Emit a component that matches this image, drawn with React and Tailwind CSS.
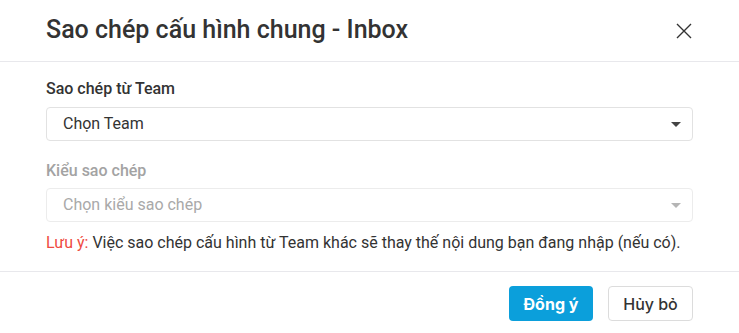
import React from 'react';

const Caret = ({ color }) => (
  <svg width="10" height="5" viewBox="0 0 10 5" className="shrink-0">
    <path d="M0 0 L10 0 L5 5 Z" fill={color} />
  </svg>
);

const SelectBox = ({ placeholder, disabled }) => (
  <div
    className={
      'flex h-[34px] items-center justify-between rounded-[4px] border pl-4 pr-[11px] ' +
      (disabled ? 'border-[#ececec] bg-white' : 'border-[#e2e2e2] bg-white')
    }
  >
    <span className={'text-[16px] ' + (disabled ? 'text-[#a9a9a9]' : 'text-[#333]')}>{placeholder}</span>
    <Caret color={disabled ? '#b5b5b5' : '#444'} />
  </div>
);

const App = () => {
  return (
    <div className="h-[333px] w-[739px] bg-white font-['Roboto',sans-serif] text-[#333]">
      {/* header */}
      <div className="flex h-[62px] items-center justify-between border-b border-[#e8e8ec] pl-[46px] pr-[46px]">
        <h2 className="text-[25px] font-medium text-[#333] leading-none pb-[2px]">Sao chép cấu hình chung - Inbox</h2>
        <svg width="16" height="16" viewBox="0 0 16 16" className="mr-[1px]">
          <path d="M1 1 L15 15 M15 1 L1 15" stroke="#333" strokeWidth="1.4" />
        </svg>
      </div>

      {/* body */}
      <div className="px-[46px] pt-[17px] pb-[18px] border-b border-[#e8e8ec]">
        <div className="text-[16px] font-medium text-[#333] leading-[20px]">Sao chép từ Team</div>
        <div className="mt-[8px]">
          <SelectBox placeholder="Chọn Team" />
        </div>
        <div className="mt-[20px] text-[16px] font-medium text-[#a3a3a3] leading-[20px]">Kiểu sao chép</div>
        <div className="mt-[7px]">
          <SelectBox placeholder="Chọn kiểu sao chép" disabled />
        </div>
        <p className="mt-[11px] text-[16px] leading-[20px] text-[#333]">
          <span className="text-[#ef4b42]">Lưu ý:</span> Việc sao chép cấu hình từ Team khác sẽ thay thế nội dung bạn đang nhập (nếu có).
        </p>
      </div>

      {/* footer */}
      <div className="flex justify-end gap-[15px] px-[46px] pt-[14px]">
        <button className="h-[35px] w-[84px] rounded-[4px] bg-[#0b9fdb] text-[16px] font-bold text-white font-['Inter',sans-serif]">
          Đồng ý
        </button>
        <button className="h-[35px] w-[85px] rounded-[4px] border border-[#dcdcdc] bg-white text-[16px] font-medium text-[#333] font-['Inter',sans-serif]">
          Hủy bỏ
        </button>
      </div>
    </div>
  );
};

export default App;
